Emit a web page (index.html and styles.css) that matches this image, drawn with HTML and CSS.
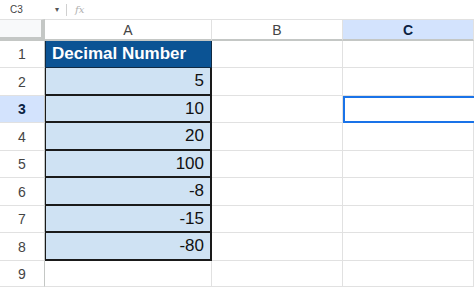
FILE: index.html
```html
<!DOCTYPE html>
<html lang="en">
<head>
    <meta charset="UTF-8">
    <title>Decimal Number Sheet</title>
    <link rel="stylesheet" href="styles.css">
</head>
<body>
    <!-- Name box and formula bar -->
    <div class="formula-bar">
        <span class="name-box">C3</span>
        <span class="caret">&#9662;</span>
        <span class="divider"></span>
        <span class="fx">fx</span>
    </div>

    <div class="sheet">
        <!-- Column headers -->
        <div class="corner"></div>
        <div class="col-head">A</div>
        <div class="col-head">B</div>
        <div class="col-head active">C</div>

        <div class="row-head">1</div>
        <div class="cell title">Decimal Number</div>
        <div class="cell"></div>
        <div class="cell"></div>

        <div class="row-head">2</div>
        <div class="cell data">5</div>
        <div class="cell"></div>
        <div class="cell"></div>

        <div class="row-head active">3</div>
        <div class="cell data">10</div>
        <div class="cell"></div>
        <div class="cell selected"></div>

        <div class="row-head">4</div>
        <div class="cell data">20</div>
        <div class="cell"></div>
        <div class="cell"></div>

        <div class="row-head">5</div>
        <div class="cell data">100</div>
        <div class="cell"></div>
        <div class="cell"></div>

        <div class="row-head">6</div>
        <div class="cell data">-8</div>
        <div class="cell"></div>
        <div class="cell"></div>

        <div class="row-head">7</div>
        <div class="cell data">-15</div>
        <div class="cell"></div>
        <div class="cell"></div>

        <div class="row-head">8</div>
        <div class="cell data">-80</div>
        <div class="cell"></div>
        <div class="cell"></div>

        <div class="row-head">9</div>
        <div class="cell"></div>
        <div class="cell"></div>
        <div class="cell"></div>
    </div>
</body>
</html>
```

FILE: styles.css
```css
body {
    margin: 0;
    padding: 0;
    background-color: #fff;
    font-family: "Liberation Sans", Arial, sans-serif;
    overflow: hidden;
}

/* Top strip with name box */
.formula-bar {
    height: 19px;
    display: flex;
    align-items: center;
    font-size: 10px;
    color: #444;
}

.name-box {
    margin-left: 10px;
    width: 45px;
}

.caret {
    font-size: 8px;
    color: #555;
}

.divider {
    width: 1px;
    height: 12px;
    background-color: #d0d0d0;
    margin-left: 7px;
}

.fx {
    margin-left: 8px;
    font-family: "DejaVu Serif", serif;
    font-style: italic;
    color: #b0b0b0;
    font-size: 10px;
}

/* Grid */
.sheet {
    display: grid;
    grid-template-columns: 45px 167px 131px 131px;
    grid-template-rows: 22px 27px 28px 27px 28px 27px 28px 27px 28px 26px;
}

.corner {
    background-color: #f8f9fa;
    border-right: 4px solid #c4c7c5;
    border-bottom: 4px solid #c4c7c5;
    border-top: 1px solid #e1e1e1;
}

.col-head {
    display: flex;
    align-items: center;
    justify-content: center;
    font-size: 14px;
    color: #444;
    border-top: 1px solid #e1e1e1;
    border-right: 1px solid #e1e1e1;
    border-bottom: 2px solid #c4c7c5;
}

.col-head.active {
    background-color: #d3e3fd;
    color: #0b1f42;
    font-weight: bold;
}

.row-head {
    display: flex;
    align-items: center;
    justify-content: center;
    font-size: 14px;
    color: #444;
    border-right: 1px solid #c4c7c5;
    border-bottom: 1px solid #e1e1e1;
}

.row-head.active {
    background-color: #d3e3fd;
    color: #0b1f42;
    font-weight: bold;
}

.cell {
    border-right: 1px solid #e1e1e1;
    border-bottom: 1px solid #e1e1e1;
}

/* Column A table */
.title {
    background-color: #0b5394;
    color: #fff;
    font-weight: bold;
    font-size: 17px;
    display: flex;
    align-items: center;
    padding-left: 6px;
    border: 1px solid #102a43;
    border-top: none;
}

.data {
    background-color: #cfe2f3;
    color: #111;
    font-size: 17px;
    display: flex;
    align-items: center;
    justify-content: flex-end;
    padding-right: 6px;
    border-left: 1px solid #1a1a1a;
    border-right: 2px solid #1a1a1a;
    border-bottom: 2px solid #1a1a1a;
}

.selected {
    border: 2px solid #1a73e8;
    border-right: none;
}
```
